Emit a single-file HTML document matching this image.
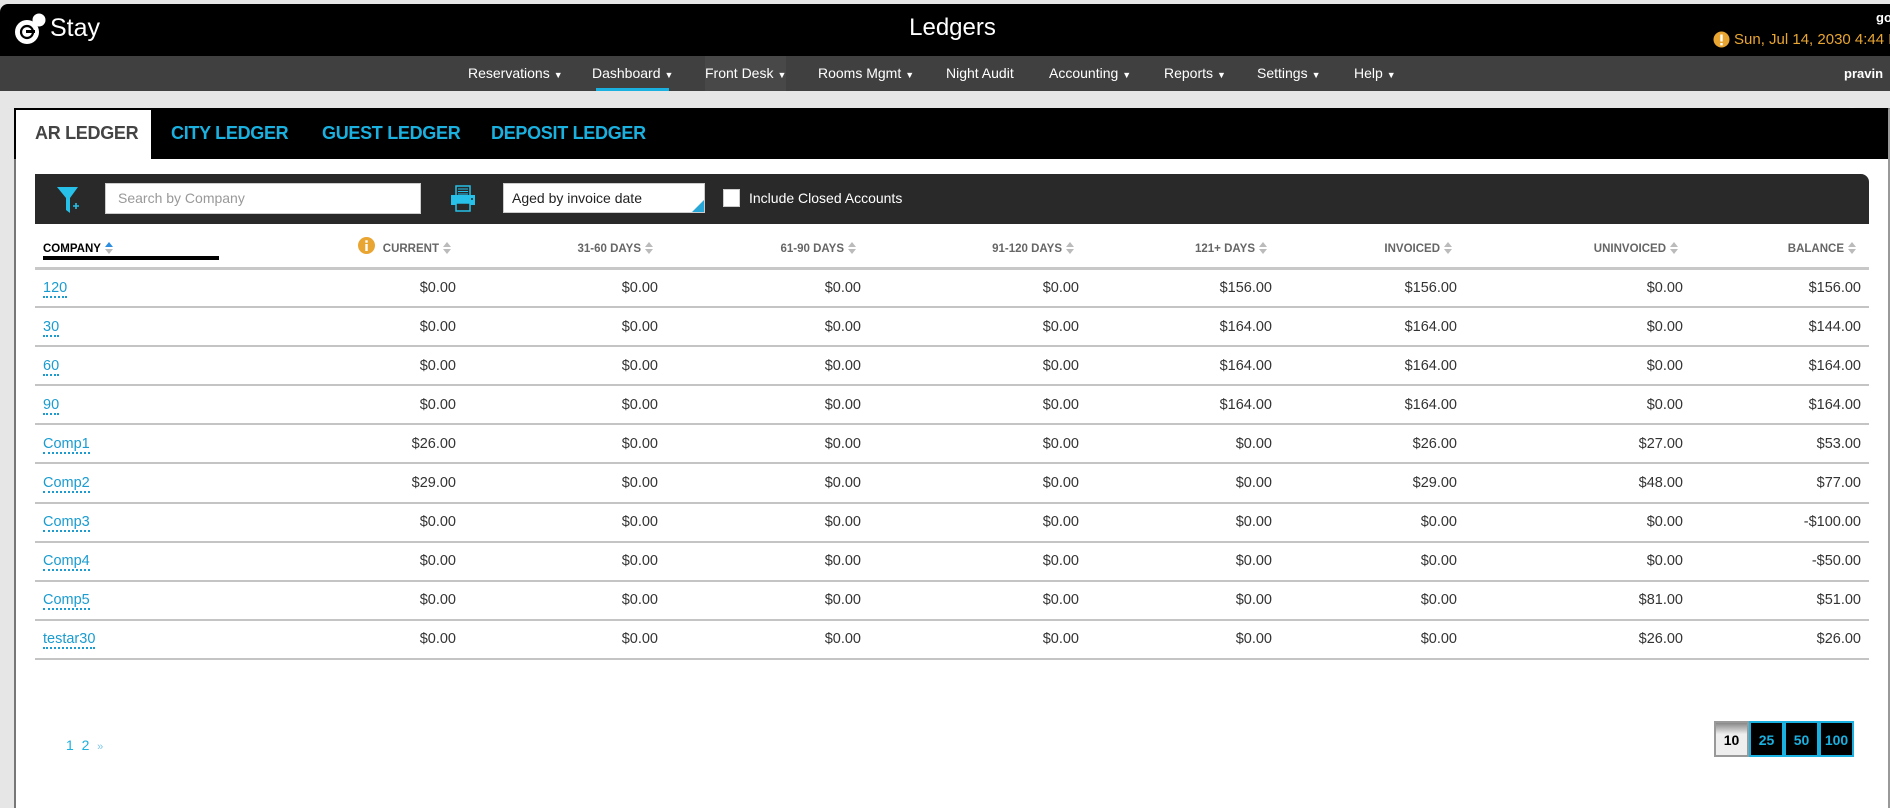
<!DOCTYPE html>
<html><head><meta charset="utf-8"><style>
*{box-sizing:border-box;margin:0;padding:0}
body{width:1890px;height:803px;overflow:hidden;background:#e6e6e6;font-family:"Liberation Sans",Arial,sans-serif;position:relative}
.abs{position:absolute}
#top{left:0;top:4px;width:1890px;height:52px;background:#000;border-radius:8px 0 0 0}
#nav{left:0;top:56px;width:1890px;height:35px;background:#404040}
.nv{position:absolute;top:0;height:35px;line-height:35px;color:#fff;font-size:14px}
.car{font-size:9px;margin-left:4px}
#panel{left:14px;top:108px;width:1876px;height:700px;background:#fff;border-left:2px solid #777;border-top:2px solid #777;border-right:2px solid #999}
#tabs{left:14px;top:108px;width:1874px;height:51px;background:#000}
.tab{position:absolute;top:108px;height:51px;line-height:51px;font-size:18px;font-weight:bold;color:#1ab0df;letter-spacing:-0.3px}
#tb{left:35px;top:174px;width:1834px;height:50px;background:#292929;border-radius:0 8px 0 0}
table{position:absolute;left:35px;top:230px;width:1834px;border-collapse:collapse;table-layout:fixed}
th{height:38px;font-size:11.5px;font-weight:bold;color:#666;text-align:right;padding-right:13px;vertical-align:middle;border-bottom:3px solid #c8c8c8}
td{height:39.1px;font-size:14.5px;color:#333;text-align:right;padding-right:8px;border-bottom:2px solid #c4c4c4}
td:first-child{text-align:left;padding-left:8px}
td a{color:#1a9cd0;text-decoration:none;border-bottom:2px dotted #1a9cd0}
.ar{display:inline-block;width:8px;height:12px;position:relative;margin-left:4px;vertical-align:-2px}
.ar:before{content:"";position:absolute;left:0;top:0;border:4px solid transparent;border-bottom:5px solid #bbb;border-top:0}
.ar:after{content:"";position:absolute;left:0;top:7px;border:4px solid transparent;border-top:5px solid #bbb;border-bottom:0}
.ar.up:before{border-bottom-color:#2d8de0}
.pg{position:absolute;top:721px;width:35px;height:36px;line-height:34px;text-align:center;font-size:14px;font-weight:bold;color:#1ab0df;background:#000;border:2px solid #1ab0df}
</style></head><body>
<div class="abs" id="top"></div>
<svg class="abs" style="left:12px;top:12px" width="34" height="34" viewBox="0 0 34 34"><circle cx="15" cy="20" r="12" fill="#fff"/><circle cx="27" cy="8" r="6.5" fill="#fff"/><circle cx="15" cy="20" r="6" fill="none" stroke="#000" stroke-width="2.2"/><rect x="14" y="18" width="9" height="3" fill="#000"/></svg>
<div class="abs" style="left:50px;top:14px;color:#fff;font-size:25px">Stay</div>
<div class="abs" style="left:0;width:1905px;top:14px;text-align:center;color:#fff;font-size:24px">Ledgers</div>
<div class="abs" style="left:1876px;top:10px;color:#fff;font-size:13px;font-weight:bold">go</div>
<svg class="abs" style="left:1713px;top:31px" width="17" height="17"><circle cx="8.5" cy="8.5" r="8" fill="#e8a531"/><rect x="7.3" y="3.5" width="2.4" height="7" fill="#fff"/><rect x="7.3" y="12" width="2.4" height="2.4" fill="#fff"/></svg>
<div class="abs" style="left:1734px;top:31px;color:#e8a531;font-size:15px;white-space:nowrap">Sun, Jul 14, 2030 4:44 PM</div>
<div class="abs" id="nav"></div>
<div class="abs" style="left:705px;top:56px;width:81px;height:35px;background:#484848"></div>
<div class="nv" style="left:468px;top:56px">Reservations<span class="car">▼</span></div>
<div class="nv" style="left:592px;top:56px">Dashboard<span class="car">▼</span></div>
<div class="abs" style="left:596px;top:88px;width:73px;height:3px;background:#1ab0df"></div>
<div class="nv" style="left:705px;top:56px">Front Desk<span class="car">▼</span></div>
<div class="nv" style="left:818px;top:56px">Rooms Mgmt<span class="car">▼</span></div>
<div class="nv" style="left:946px;top:56px">Night Audit</div>
<div class="nv" style="left:1049px;top:56px">Accounting<span class="car">▼</span></div>
<div class="nv" style="left:1164px;top:56px">Reports<span class="car">▼</span></div>
<div class="nv" style="left:1257px;top:56px">Settings<span class="car">▼</span></div>
<div class="nv" style="left:1354px;top:56px">Help<span class="car">▼</span></div>
<div class="nv" style="left:1844px;top:56px;font-weight:bold;font-size:13px">pravin <span class="car">▼</span></div>
<div class="abs" id="panel"></div>
<div class="abs" id="tabs"></div>
<div class="abs" style="left:16px;top:110px;width:135px;height:49px;background:#fff"></div>
<div class="tab" style="left:35px;color:#444">AR LEDGER</div>
<div class="tab" style="left:171px">CITY LEDGER</div>
<div class="tab" style="left:322px">GUEST LEDGER</div>
<div class="tab" style="left:491px">DEPOSIT LEDGER</div>
<div class="abs" id="tb"></div>
<svg class="abs" style="left:56px;top:185px" width="26" height="30" viewBox="0 0 26 30"><path d="M1 2 H22 L14 13 V28 L10 25 V13 Z" fill="#27c0e8"/><path d="M17 21 h6 M20 18 v6" stroke="#27c0e8" stroke-width="1.6"/></svg>
<div class="abs" style="left:105px;top:183px;width:316px;height:31px;background:#fff;border:1px solid #ccc;padding-left:12px;line-height:29px;font-size:14px;color:#999">Search by Company</div>
<svg class="abs" style="left:450px;top:185px" width="26" height="27" viewBox="0 0 26 27"><rect x="6" y="1" width="14" height="10" fill="none" stroke="#27c0e8" stroke-width="1.5"/><path d="M8 4h10M8 6.5h10M8 9h10" stroke="#27c0e8"/><rect x="1" y="10" width="24" height="10" fill="#27c0e8"/><rect x="6" y="18" width="14" height="8" fill="#292929" stroke="#27c0e8" stroke-width="1.5"/><circle cx="22" cy="14" r="1" fill="#292929"/></svg>
<div class="abs" style="left:503px;top:183px;width:202px;height:30px;background:#fff;border:1px solid #ccc;padding-left:8px;line-height:28px;font-size:14px;color:#222;overflow:hidden">Aged by invoice date<div class="abs" style="right:0;bottom:0;width:0;height:0;border-left:12px solid transparent;border-bottom:12px solid #27a7d8"></div></div>
<div class="abs" style="left:723px;top:189px;width:17px;height:18px;background:#fff;border:1px solid #ccc"></div>
<div class="abs" style="left:749px;top:190px;color:#fff;font-size:14px">Include Closed Accounts</div>
<div class="abs" style="left:43px;top:256px;width:176px;height:4px;background:#000"></div>
<svg class="abs" style="left:358px;top:237px" width="17" height="17"><circle cx="8.5" cy="8.5" r="8.5" fill="#e8a531"/><rect x="7.3" y="7" width="2.4" height="7" fill="#fff"/><rect x="7.3" y="3.3" width="2.4" height="2.4" fill="#fff"/></svg>
<table>
<colgroup><col style="width:215px"><col style="width:214px"><col style="width:202px"><col style="width:203px"><col style="width:218px"><col style="width:193px"><col style="width:185px"><col style="width:226px"><col style="width:178px"></colgroup>
<tr><th style="text-align:left;padding-left:8px;color:#000">COMPANY<span class="ar up"></span></th><th>CURRENT<span class="ar"></span></th><th>31-60 DAYS<span class="ar"></span></th><th>61-90 DAYS<span class="ar"></span></th><th>91-120 DAYS<span class="ar"></span></th><th>121+ DAYS<span class="ar"></span></th><th>INVOICED<span class="ar"></span></th><th>UNINVOICED<span class="ar"></span></th><th>BALANCE<span class="ar"></span></th></tr>
<tr><td><a>120</a></td><td>$0.00</td><td>$0.00</td><td>$0.00</td><td>$0.00</td><td>$156.00</td><td>$156.00</td><td>$0.00</td><td>$156.00</td></tr>
<tr><td><a>30</a></td><td>$0.00</td><td>$0.00</td><td>$0.00</td><td>$0.00</td><td>$164.00</td><td>$164.00</td><td>$0.00</td><td>$144.00</td></tr>
<tr><td><a>60</a></td><td>$0.00</td><td>$0.00</td><td>$0.00</td><td>$0.00</td><td>$164.00</td><td>$164.00</td><td>$0.00</td><td>$164.00</td></tr>
<tr><td><a>90</a></td><td>$0.00</td><td>$0.00</td><td>$0.00</td><td>$0.00</td><td>$164.00</td><td>$164.00</td><td>$0.00</td><td>$164.00</td></tr>
<tr><td><a>Comp1</a></td><td>$26.00</td><td>$0.00</td><td>$0.00</td><td>$0.00</td><td>$0.00</td><td>$26.00</td><td>$27.00</td><td>$53.00</td></tr>
<tr><td><a>Comp2</a></td><td>$29.00</td><td>$0.00</td><td>$0.00</td><td>$0.00</td><td>$0.00</td><td>$29.00</td><td>$48.00</td><td>$77.00</td></tr>
<tr><td><a>Comp3</a></td><td>$0.00</td><td>$0.00</td><td>$0.00</td><td>$0.00</td><td>$0.00</td><td>$0.00</td><td>$0.00</td><td>-$100.00</td></tr>
<tr><td><a>Comp4</a></td><td>$0.00</td><td>$0.00</td><td>$0.00</td><td>$0.00</td><td>$0.00</td><td>$0.00</td><td>$0.00</td><td>-$50.00</td></tr>
<tr><td><a>Comp5</a></td><td>$0.00</td><td>$0.00</td><td>$0.00</td><td>$0.00</td><td>$0.00</td><td>$0.00</td><td>$81.00</td><td>$51.00</td></tr>
<tr><td><a>testar30</a></td><td>$0.00</td><td>$0.00</td><td>$0.00</td><td>$0.00</td><td>$0.00</td><td>$0.00</td><td>$26.00</td><td>$26.00</td></tr>
</table>
<div class="abs" style="left:66px;top:737px;font-size:14px;color:#1ab0df">1&nbsp;&nbsp;2&nbsp;&nbsp;<span style="font-size:11px;color:#7cc8e8">»</span></div>
<div class="pg" style="left:1714px;background:linear-gradient(#888,#eee 35%,#eee);color:#000;border-color:#999">10</div>
<div class="pg" style="left:1749px">25</div>
<div class="pg" style="left:1784px">50</div>
<div class="pg" style="left:1819px">100</div>
</body></html>
